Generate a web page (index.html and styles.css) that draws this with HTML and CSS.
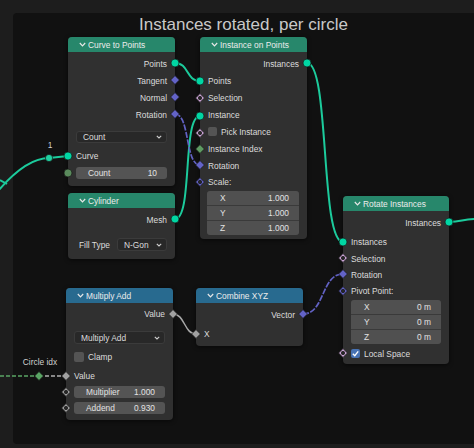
FILE: index.html
```html
<!DOCTYPE html>
<html lang="en">
<head>
    <meta charset="UTF-8">
    <meta name="viewport" content="width=device-width, initial-scale=1.0">
    <title>Instances rotated, per circle</title>
    <link rel="stylesheet" href="styles.css">
</head>
<body>
    <div class="editor">
        <div class="frame">
            <div class="frame-title">Instances rotated, per circle</div>
        </div>

        <!-- Curve to Points -->
        <div class="node geo n-curve">
            <div class="node-head"><svg class="chev" viewBox="0 0 7 5"><polyline points="0.8,1 3.5,3.8 6.2,1"/></svg>Curve to Points</div>
            <div class="node-body">
                <div class="row out">Points</div>
                <div class="row out">Tangent</div>
                <div class="row out">Normal</div>
                <div class="row out">Rotation</div>
                <div class="select mt8"><span>Count</span><svg class="drop" viewBox="0 0 6 4"><polyline points="0.8,0.8 3,3 5.2,0.8"/></svg></div>
                <div class="row mt4">Curve</div>
                <div class="num mt3"><span>Count</span><span>10</span></div>
            </div>
        </div>

        <!-- Cylinder -->
        <div class="node geo n-cyl">
            <div class="node-head"><svg class="chev" viewBox="0 0 7 5"><polyline points="0.8,1 3.5,3.8 6.2,1"/></svg>Cylinder</div>
            <div class="node-body pb8">
                <div class="row out">Mesh</div>
                <div class="fill-row">
                    <span>Fill Type</span>
                    <div class="select fill-select"><span>N-Gon</span><svg class="drop" viewBox="0 0 6 4"><polyline points="0.8,0.8 3,3 5.2,0.8"/></svg></div>
                </div>
            </div>
        </div>

        <!-- Instance on Points -->
        <div class="node geo n-iop">
            <div class="node-head"><svg class="chev" viewBox="0 0 7 5"><polyline points="0.8,1 3.5,3.8 6.2,1"/></svg>Instance on Points</div>
            <div class="node-body pb4">
                <div class="row out">Instances</div>
                <div class="row">Points</div>
                <div class="row">Selection</div>
                <div class="row">Instance</div>
                <div class="row"><span class="check"></span>Pick Instance</div>
                <div class="row">Instance Index</div>
                <div class="row">Rotation</div>
                <div class="row short">Scale:</div>
                <div class="vec">
                    <div><span>X</span><span>1.000</span></div>
                    <div><span>Y</span><span>1.000</span></div>
                    <div><span>Z</span><span>1.000</span></div>
                </div>
            </div>
        </div>

        <!-- Rotate Instances -->
        <div class="node geo n-rot">
            <div class="node-head"><svg class="chev" viewBox="0 0 7 5"><polyline points="0.8,1 3.5,3.8 6.2,1"/></svg>Rotate Instances</div>
            <div class="node-body pb2">
                <div class="row out">Instances</div>
                <div class="row mt2">Instances</div>
                <div class="row">Selection</div>
                <div class="row short">Rotation</div>
                <div class="row short">Pivot Point:</div>
                <div class="vec">
                    <div><span>X</span><span>0 m</span></div>
                    <div><span>Y</span><span>0 m</span></div>
                    <div><span>Z</span><span>0 m</span></div>
                </div>
                <div class="row mt1"><span class="check on"><svg viewBox="0 0 10 10"><polyline points="2,5.2 4.2,7.4 8,2.6"/></svg></span>Local Space</div>
            </div>
        </div>

        <!-- Combine XYZ -->
        <div class="node util n-xyz">
            <div class="node-head"><svg class="chev" viewBox="0 0 7 5"><polyline points="0.8,1 3.5,3.8 6.2,1"/></svg>Combine XYZ</div>
            <div class="node-body pb4">
                <div class="row out">Vector</div>
                <div class="row mt2">X</div>
            </div>
        </div>

        <!-- Multiply Add -->
        <div class="node util n-madd">
            <div class="node-head"><svg class="chev" viewBox="0 0 7 5"><polyline points="0.8,1 3.5,3.8 6.2,1"/></svg>Multiply Add</div>
            <div class="node-body pt2 pb6">
                <div class="row out">Value</div>
                <div class="select tall mt9"><span>Multiply Add</span><svg class="drop" viewBox="0 0 6 4"><polyline points="0.8,0.8 3,3 5.2,0.8"/></svg></div>
                <div class="row mt4"><span class="check big"></span>Clamp</div>
                <div class="row mt2">Value</div>
                <div class="num mt2"><span>Multiplier</span><span>1.000</span></div>
                <div class="num mt4"><span>Addend</span><span>0.930</span></div>
            </div>
        </div>

        <!-- links, reroutes and sockets -->
        <svg class="links" viewBox="0 0 474 448">
            <defs>
                <polygon id="dia" points="0,-4.4 4.4,0 0,4.4 -4.4,0"/>
                <g id="ddia">
                    <polygon points="0,-4.4 4.4,0 0,4.4 -4.4,0"/>
                    <circle r="1.7" fill="#262626"/>
                </g>
            </defs>

            <g class="wire teal">
                <path d="M49,158 C33,158 16,170 -2,191"/>
                <path d="M7,184 L0,180"/>
                <path d="M49,158 L68,156"/>
                <path d="M175,63 C189,63 186,81 200,81"/>
                <path d="M175,219 C193,219 182,116 200,116"/>
                <path d="M307,63 C330,63 320,242 343,242"/>
                <path d="M449,222 C462,222 462,219 476,219"/>
            </g>
            <g class="wire purple">
                <path d="M175,114 C190,114 185,165 200,165"/>
                <path d="M303,314 C325,314 321,274 343,274"/>
            </g>
            <path class="wire grey" d="M173,314 C185,314 184,334 196,334"/>
            <path class="wire green-dash" d="M0,376 L39,376"/>
            <path class="wire grey-dash" d="M39,376 L66,376"/>

            <text class="reroute-label" x="50" y="148">1</text>
            <text class="reroute-label" x="40" y="365">Circle idx</text>

            <g class="sock">
                <!-- reroutes -->
                <circle cx="49" cy="158" r="3.6" fill="#1fd1a0"/>
                <use href="#dia" x="39" y="376" fill="#5aa564"/>

                <!-- Curve to Points -->
                <circle cx="175" cy="63" r="4" fill="#00d6a3"/>
                <use href="#dia" x="175" y="80" fill="#6363c7"/>
                <use href="#dia" x="175" y="97" fill="#6363c7"/>
                <use href="#dia" x="175" y="114" fill="#6363c7"/>
                <circle cx="68" cy="156" r="4" fill="#00d6a3"/>
                <circle cx="68" cy="173" r="4" fill="#5a8a5c"/>

                <!-- Cylinder -->
                <circle cx="175" cy="219" r="4" fill="#00d6a3"/>

                <!-- Instance on Points -->
                <circle cx="307" cy="63" r="4" fill="#00d6a3"/>
                <circle cx="200" cy="81" r="4" fill="#00d6a3"/>
                <use href="#ddia" x="200" y="98" fill="#cca6d6"/>
                <circle cx="200" cy="116" r="4" fill="#00d6a3"/>
                <use href="#ddia" x="200" y="133" fill="#cca6d6"/>
                <use href="#dia" x="200" y="149" fill="#5e9b62"/>
                <use href="#dia" x="200" y="165" fill="#6363c7"/>
                <use href="#ddia" x="200" y="182" fill="#6363c7"/>

                <!-- Rotate Instances -->
                <circle cx="449" cy="222" r="4" fill="#00d6a3"/>
                <circle cx="343" cy="242" r="4" fill="#00d6a3"/>
                <use href="#ddia" x="343" y="258" fill="#cca6d6"/>
                <use href="#dia" x="343" y="274" fill="#6363c7"/>
                <use href="#ddia" x="343" y="291" fill="#6363c7"/>
                <use href="#ddia" x="343" y="353" fill="#cca6d6"/>

                <!-- Combine XYZ -->
                <use href="#dia" x="303" y="314" fill="#6363c7"/>
                <use href="#dia" x="196" y="334" fill="#a1a1a1"/>

                <!-- Multiply Add -->
                <use href="#dia" x="173" y="314" fill="#a1a1a1"/>
                <use href="#dia" x="66" y="376" fill="#a1a1a1"/>
                <use href="#ddia" x="66" y="392" fill="#a1a1a1"/>
                <use href="#ddia" x="66" y="408" fill="#a1a1a1"/>
            </g>
        </svg>
    </div>
</body>
</html>
```

FILE: styles.css
```css
body {
    margin: 0;
    background-color: #1d1d1d;
    font-family: "Liberation Sans", Arial, sans-serif;
    font-size: 8.4px;
    color: #dcdcdc;
}

.editor {
    position: relative;
    width: 474px;
    height: 448px;
    overflow: hidden;
}

.frame {
    position: absolute;
    left: 13px;
    top: 13px;
    right: 0;
    height: 431px;
    background-color: #111111;
    border-radius: 4px 0 0 4px;
}

.frame-title {
    padding-top: 2px;
    line-height: 20px;
    font-size: 17px;
    text-align: center;
    color: #c9c9c9;
}

/* nodes */
.node {
    position: absolute;
    width: 107px;
    background-color: #303030;
    border-radius: 4px;
    box-shadow: 0 1px 4px rgba(0, 0, 0, 0.6);
}

.n-curve { left: 68px;  top: 37px; }
.n-cyl   { left: 68px;  top: 193px; }
.n-iop   { left: 200px; top: 37px; }
.n-rot   { left: 343px; top: 196px; width: 106px; }
.n-xyz   { left: 196px; top: 288px; }
.n-madd  { left: 66px;  top: 288px; }

.node-head {
    height: 15px;
    display: flex;
    align-items: center;
    padding-left: 11px;
    color: #ececec;
    border-radius: 4px 4px 0 0;
}

.geo .node-head {
    background-color: #27876b;
}

.util .node-head {
    background-color: #286a8f;
}

.chev {
    width: 7px;
    height: 5px;
    margin-right: 2px;
    fill: none;
    stroke: #e8e8e8;
    stroke-width: 1.2;
}

.node-body {
    padding: 3px 0 7px;
}

.row {
    height: 17px;
    display: flex;
    align-items: center;
    padding: 0 8px;
}

.row.out {
    justify-content: flex-end;
}

.row.short {
    height: 16px;
}

/* widgets */
.select {
    box-sizing: border-box;
    height: 12px;
    margin: 0 8px;
    padding: 0 4px 0 6px;
    display: flex;
    align-items: center;
    justify-content: space-between;
    background-color: #282828;
    border: 1px solid #3b3b3b;
    border-radius: 3px;
}

.select.tall {
    height: 13px;
}

.drop {
    width: 6px;
    height: 4px;
    fill: none;
    stroke: #cfcfcf;
    stroke-width: 1.1;
}

.fill-row {
    height: 13px;
    margin-top: 10px;
    padding: 0 8px 0 11px;
    display: flex;
    align-items: center;
    justify-content: space-between;
}

.fill-select {
    width: 50px;
    height: 13px;
    margin: 0;
}

.num {
    height: 12px;
    margin: 0 8px;
    padding: 0 10px 0 12px;
    display: flex;
    align-items: center;
    justify-content: space-between;
    background-color: #545454;
    border-radius: 3px;
    color: #e2e2e2;
}

.vec {
    margin: 1px 8px 0 7px;
    display: flex;
    flex-direction: column;
    gap: 1px;
    background-color: #3a3a3a;
    border-radius: 3px;
    overflow: hidden;
}

.n-rot .vec {
    margin: 1px 8px 0 8px;
}

.vec div {
    height: 14px;
    padding: 0 10px 0 13px;
    display: flex;
    align-items: center;
    justify-content: space-between;
    background-color: #505050;
    color: #e2e2e2;
}

.check {
    width: 9px;
    height: 9px;
    margin-right: 4px;
    background-color: #545454;
    border-radius: 2px;
}

.check.big {
    width: 10px;
    height: 10px;
}

.check.on {
    background-color: #4772b3;
    display: flex;
}

.check.on svg {
    width: 9px;
    height: 9px;
    fill: none;
    stroke: #ffffff;
    stroke-width: 1.5;
}

.mt1 { margin-top: 1px; }
.mt2 { margin-top: 2px; }
.mt3 { margin-top: 3px; }
.mt4 { margin-top: 4px; }
.mt8 { margin-top: 8px; }
.mt9 { margin-top: 9px; }
.pt2 { padding-top: 2px; }
.pb2 { padding-bottom: 2px; }
.pb4 { padding-bottom: 4px; }
.pb6 { padding-bottom: 6px; }
.pb8 { padding-bottom: 8px; }

/* links */
.links {
    position: absolute;
    left: 0;
    top: 0;
    width: 474px;
    height: 448px;
    pointer-events: none;
}

.wire {
    fill: none;
    stroke-width: 2;
}

.teal {
    stroke: #1ccb9c;
}

.purple {
    stroke: #6262c4;
    stroke-width: 1.7;
    stroke-dasharray: 6 1.5;
}

.grey {
    stroke: #a8a8a8;
    stroke-width: 1.5;
}

.green-dash {
    stroke: #5aa564;
    stroke-width: 1.5;
    stroke-dasharray: 4 2;
}

.grey-dash {
    stroke: #b0b0b0;
    stroke-width: 1.5;
    stroke-dasharray: 4 2;
}

.reroute-label {
    font-family: "Liberation Sans", Arial, sans-serif;
    font-size: 8.4px;
    fill: #d0d0d0;
    text-anchor: middle;
}

.sock circle,
.sock use {
    stroke: #151515;
    stroke-width: 0.7;
}
```
